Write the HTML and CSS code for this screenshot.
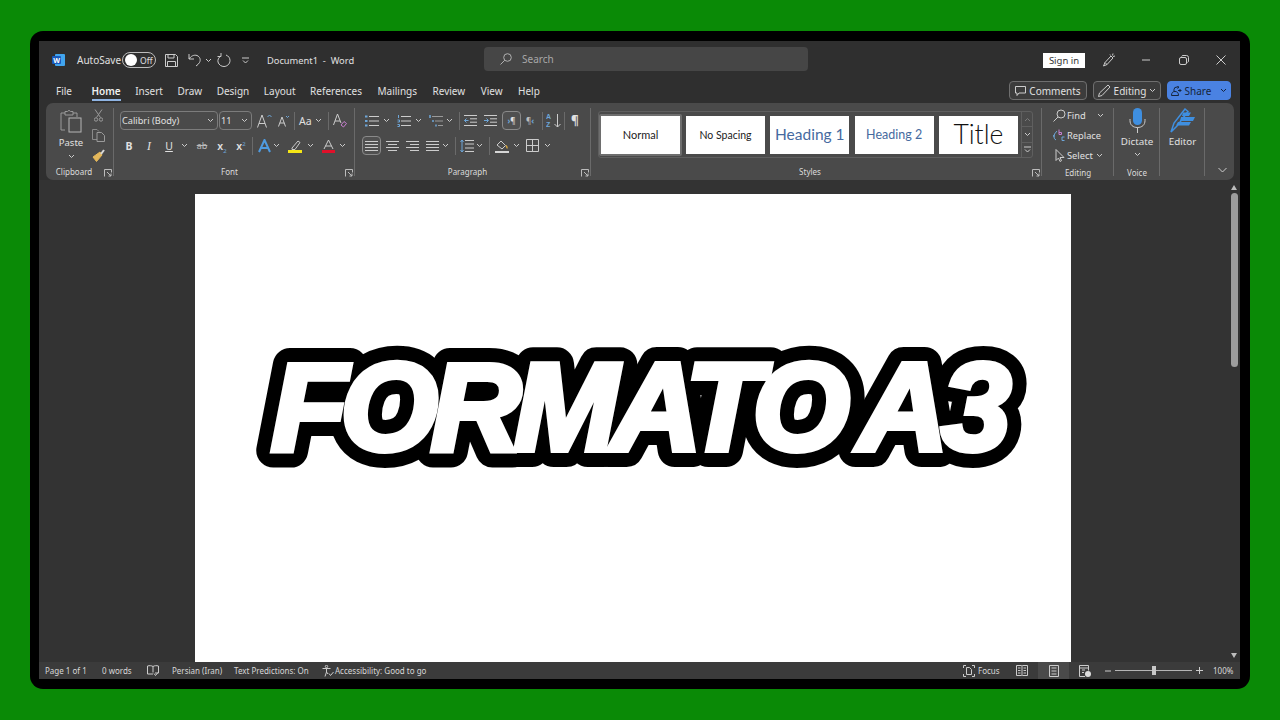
FILE: index.html
```html
<!DOCTYPE html>
<html lang="en">
<head>
    <meta charset="UTF-8">
    <title>Document1 - Word</title>
    <link rel="stylesheet" href="styles.css">
</head>
<body>
<svg class="defs" width="0" height="0">
    <symbol id="chev" viewBox="0 0 7 5"><path d="M1 1l2.500 2.500L6 1"/></symbol>
    <symbol id="launch" viewBox="0 0 8 8"><path d="M.5 7.500V.5h7v3M3 3l4 4M7 4.500V7H4.500"/></symbol>
    <symbol id="lines" viewBox="0 0 13 12"><path d="M0 1.500h13M0 4.500h13M0 7.500h13M0 10.500h13"/></symbol>
</svg>

<div class="frame">
<div class="window">

    <!-- title bar -->
    <div class="titlebar">
        <div class="tb-left">
            <svg class="word-logo" width="13" height="12" viewBox="0 0 13 12"><rect x="3" y="0" width="10" height="12" rx="1" fill="#41a5ee" stroke="none"/><rect x="0" y="2" width="9" height="8" rx="1" fill="#185abd" stroke="none"/><text x="1.200" y="8.500" font-size="7" font-weight="700" fill="#fff">W</text></svg>
            <span class="autosave">AutoSave</span>
            <span class="toggle"><i class="knob"></i><span>Off</span></span>
            <svg class="save" width="13" height="13" viewBox="0 0 13 13"><path d="M.5.5h10l2 2v10H.5zM3 .5v3.500h6V.5M2.500 12.500V7.500h8v5"/></svg>
            <svg class="undo" width="14" height="14" viewBox="0 0 14 14"><path d="M1 1v5h5M1 6c2-3 5-4.500 8-3.500 3 1.200 4 4.500 2.500 7-.8 1.500-2 2.500-3.500 3.500"/></svg>
            <svg class="chev-sm ml3" width="7" height="5"><use href="#chev"/></svg>
            <svg class="redo" width="14" height="14" viewBox="0 0 14 14"><path d="M4 3C1.500 4.500.5 7 1 9c.8 3 3.500 4.500 6 4.500 3 0 6-2.500 6-6 0-2.500-1.500-4.500-4-5.500M4 0v3.500H.5"/></svg>
            <svg class="qat" width="7" height="7" viewBox="0 0 7 7"><path d="M0 1h7M1 3.500l2.500 2.500L6 3.500"/></svg>
            <span class="doc-title">Document1&nbsp; - &nbsp;Word</span>
        </div>
        <div class="search">
            <svg width="12" height="12" viewBox="0 0 12 12"><circle cx="7.500" cy="4.500" r="3.800"/><path d="M4.800 7.200L.5 11.500"/></svg>
            <span>Search</span>
        </div>
        <div class="tb-right">
            <span class="signin">Sign in</span>
            <svg class="pen" width="14" height="15" viewBox="0 0 14 15"><path d="M9 3L3 9.500 1.500 13l3.500-1.500L11 5zM8 1.500l.5 1M11 .5l-.5 2M13 3l-2 .5M3 9.500l2 2"/></svg>
            <svg class="win-min" width="10" height="10" viewBox="0 0 10 10"><path d="M1 5h8"/></svg>
            <svg class="win-max" width="10" height="10" viewBox="0 0 10 10"><rect x=".5" y="2.500" width="7" height="7" rx="1.500"/><path d="M2.500 1.500q.5-1 1.500-1h3.500q2 0 2 2V6q0 1-1 1.500"/></svg>
            <svg class="win-close" width="10" height="10" viewBox="0 0 10 10"><path d="M.5.5l9 9M9.500.5l-9 9"/></svg>
        </div>
    </div>

    <!-- tabs -->
    <div class="tabs">
        <span class="tab tab-file">File</span>
        <span class="tab active">Home</span>
        <span class="tab">Insert</span>
        <span class="tab">Draw</span>
        <span class="tab">Design</span>
        <span class="tab">Layout</span>
        <span class="tab">References</span>
        <span class="tab tab-late">Mailings</span>
        <span class="tab tab-late">Review</span>
        <span class="tab tab-late">View</span>
        <span class="tab tab-late">Help</span>
        <div class="tab-actions">
            <span class="pill pill-comments">
                <svg width="11" height="10" viewBox="0 0 11 10"><path d="M.5.5h10v6.500H4L2 9.500V7H.5z"/></svg>Comments
            </span>
            <span class="pill pill-editing">
                <svg width="13" height="13" viewBox="0 0 13 13"><path d="M10 1l2 2-8 8.500-3.500 1 1-3.500z"/></svg>Editing
                <svg width="7" height="5"><use href="#chev"/></svg>
            </span>
            <span class="pill pill-share">
                <svg width="11" height="10" viewBox="0 0 11 10"><path d="M.5 9.500c0-3 1.500-4 3.500-4s3.500 1 3.500 4zM3 5.500V3.500Q3 1 6 1h1.500M6.500 .5L8 1.200 6.500 2.500M7 4.500h3.500M9 3v3"/></svg>Share
                <svg class="share-chev" width="7" height="5"><use href="#chev"/></svg>
            </span>
        </div>
    </div>

    <!-- ribbon -->
    <div class="ribbon">

        <div class="group g-clipboard">
            <div class="group-body clip-body">
                <div class="paste">
                    <svg width="22" height="24" viewBox="0 0 22 24"><path d="M5 21H1V4h4M13 4h4v4M5 4V2.500h2.500Q9 0 10.500 2.500H13V6H5z" stroke="#9a9a9a"/><rect x="9" y="9" width="12" height="14" stroke="#b5b5b5"/></svg>
                    <span>Paste</span>
                    <svg width="7" height="5"><use href="#chev"/></svg>
                </div>
                <div class="clip-small">
                    <svg width="9" height="13" viewBox="0 0 9 13"><path d="M1 .5l5.500 8M8 .5L2.500 8.500" stroke="#9a9a9a"/><circle cx="2" cy="10.500" r="1.700" stroke="#9a9a9a"/><circle cx="7" cy="10.500" r="1.700" stroke="#9a9a9a"/></svg>
                    <svg width="13" height="13" viewBox="0 0 13 13"><path d="M5 10.500H.5V.5H5l2 2" stroke="#8a8a8a"/><path d="M5 3.500h4.500l3 3v6H5z" stroke="#9a9a9a"/></svg>
                    <svg width="13" height="13" viewBox="0 0 13 13"><path d="M8 3L1 8l3.500 4.500L10 6z" fill="#e3b75b" stroke="#e3b75b"/><path d="M9 5l3-4" stroke="#d8d8d8" stroke-width="2"/></svg>
                </div>
            </div>
            <div class="group-label">Clipboard</div>
            <svg class="launcher" width="8" height="8"><use href="#launch"/></svg>
        </div>

        <div class="group g-font">
            <div class="group-body rows">
                <div class="row">
                    <div class="select sel-font"><span>Calibri (Body)</span><svg width="7" height="5"><use href="#chev"/></svg></div>
                    <div class="select sel-size ml1"><span>11</span><svg width="7" height="5"><use href="#chev"/></svg></div>
                    <svg class="ml5" width="15" height="14" viewBox="0 0 15 14"><path d="M.5 13.500L5 1l4.500 12.500M2 9.500h6"/><path d="M10.500 3l2-2 2 2" stroke="#6ea6d8"/></svg>
                    <svg class="ml6" width="12" height="12" viewBox="0 0 12 12"><path d="M.5 11.500L4 2l3.500 9.500M1.800 8h4.400"/><path d="M8 1l1.500 1.500L11 1" stroke="#6ea6d8"/></svg>
                    <i class="sep ml4"></i>
                    <span class="txt-icon aa ml4">Aa</span>
                    <svg class="ml1" width="7" height="5"><use href="#chev"/></svg>
                    <i class="sep ml6"></i>
                    <svg class="ml4" width="14" height="15" viewBox="0 0 14 15"><path d="M.5 12L4.500 1 8 10M2 8h5"/><path d="M8 12l3-3.500 2.500 2-3 3.500z" stroke="#c77fd0"/></svg>
                </div>
                <div class="row">
                    <span class="fmt bold">B</span>
                    <span class="fmt ital ml2">I</span>
                    <span class="fmt under ml2">U</span>
                    <svg class="ml3" width="7" height="5"><use href="#chev"/></svg>
                    <span class="fmt strike ml7">ab</span>
                    <span class="fmt script ml6">x<sub>2</sub></span>
                    <span class="fmt script ml5">x<sup>2</sup></span>
                    <i class="sep ml4"></i>
                    <svg class="ml5" width="13" height="14" viewBox="0 0 13 14"><path d="M1 13L6.500 1 12 13M3 9h7" stroke="#4f9be0" stroke-width="2"/></svg>
                    <svg class="ml2" width="7" height="5"><use href="#chev"/></svg>
                    <svg class="ml8" width="14" height="14" viewBox="0 0 14 14"><path d="M4 9l6-7 2 1.500-5 7H4z"/><rect x="0" y="11" width="14" height="3" fill="#f5e616" stroke="none"/></svg>
                    <svg class="ml5" width="7" height="5"><use href="#chev"/></svg>
                    <svg class="ml8" width="13" height="14" viewBox="0 0 13 14"><path d="M2 10L6.500 1 11 10M3.500 7h6"/><rect x="0" y="11" width="13" height="3" fill="#e0102a" stroke="none"/></svg>
                    <svg class="ml4" width="7" height="5"><use href="#chev"/></svg>
                </div>
            </div>
            <div class="group-label">Font</div>
            <svg class="launcher" width="8" height="8"><use href="#launch"/></svg>
        </div>

        <div class="group g-para">
            <div class="group-body rows">
                <div class="row">
                    <svg class="ml3" width="14" height="12" viewBox="0 0 14 12"><path d="M4 1.500h10M4 6h10M4 10.500h10"/><path d="M0 1.500h2.500M0 6h2.500M0 10.500h2.500" stroke="#6ea6d8" stroke-width="2"/></svg>
                    <svg class="ml4" width="7" height="5"><use href="#chev"/></svg>
                    <svg class="ml7" width="14" height="12" viewBox="0 0 14 12"><path d="M4 1.500h10M4 6h10M4 10.500h10"/><path d="M1.500 0v3M.5 5h2v2h-2M.5 9.500h2v2h-2" stroke="#6ea6d8"/></svg>
                    <svg class="ml4" width="7" height="5"><use href="#chev"/></svg>
                    <svg class="ml7" width="14" height="12" viewBox="0 0 14 12"><path d="M3 1.500h11M6 6h8M9 10.500h5" stroke="#9a9a9a"/><path d="M1 0v3M4 5v2M7 9.500v2" stroke="#6ea6d8" stroke-width="1.500"/></svg>
                    <svg class="ml3" width="7" height="5"><use href="#chev"/></svg>
                    <i class="sep ml6"></i>
                    <svg class="ml4" width="13" height="11" viewBox="0 0 13 11"><path d="M0 .5h13M6 3.800h7M6 7.200h7M0 10.500h13"/><path d="M4.500 5.500H.5M2.500 3.500l-2 2 2 2" stroke="#6ea6d8"/></svg>
                    <svg class="ml7" width="13" height="11" viewBox="0 0 13 11"><path d="M0 .5h13M6 3.800h7M6 7.200h7M0 10.500h13"/><path d="M0 5.500h4M2.500 3.500l2 2-2 2" stroke="#6ea6d8"/></svg>
                    <span class="btn-on ltr ml5"><b>›</b>¶</span>
                    <span class="rtl ml5">¶<b>‹</b></span>
                    <i class="sep ml4"></i>
                    <svg class="sort ml3" width="15" height="17" viewBox="0 0 15 17"><text x="0" y="7" fill="#6ea6d8">A</text><text x="0" y="15" fill="#6ea6d8">Z</text><path d="M11.500 2v13M8.500 12l3 3 3-3"/></svg>
                    <i class="sep ml3"></i>
                    <span class="pilcrow ml6">¶</span>
                </div>
                <div class="row">
                    <span class="btn-on"><svg width="13" height="12"><use href="#lines"/></svg></span>
                    <svg class="ml5" width="13" height="12" viewBox="0 0 13 12"><path d="M0 1.500h13M2 4.500h9M0 7.500h13M2 10.500h9"/></svg>
                    <svg class="ml7" width="13" height="12" viewBox="0 0 13 12"><path d="M0 1.500h13M4 4.500h9M0 7.500h13M4 10.500h9"/></svg>
                    <svg class="ml7" width="13" height="12"><use href="#lines"/></svg>
                    <svg class="ml3" width="7" height="5"><use href="#chev"/></svg>
                    <i class="sep ml6"></i>
                    <svg class="ml4" width="14" height="14" viewBox="0 0 14 14"><path d="M5 1.500h9M5 5h9M5 9h9M5 12.500h9"/><path d="M2 1v12M.5 3L2 1l1.500 2M.5 11L2 13l1.500-2" stroke="#6ea6d8"/></svg>
                    <svg class="ml2" width="7" height="5"><use href="#chev"/></svg>
                    <i class="sep ml6"></i>
                    <svg class="ml5" width="14" height="14" viewBox="0 0 14 14"><path d="M2 6l4-4 4.500 4.500-3.500 3.500z"/><path d="M11 6.500q1.500 2 1 3" stroke="#d6a53e" stroke-width="1.500"/><rect x="0" y="12" width="14" height="2" fill="#d6d6d6" stroke="none"/></svg>
                    <svg class="ml4" width="7" height="5"><use href="#chev"/></svg>
                    <svg class="ml6" width="13" height="13" viewBox="0 0 13 13"><path d="M.5.5h12v12H.5zM6.500.5v12M.5 6.500h12"/></svg>
                    <svg class="ml5" width="7" height="5"><use href="#chev"/></svg>
                </div>
            </div>
            <div class="group-label">Paragraph</div>
            <svg class="launcher" width="8" height="8"><use href="#launch"/></svg>
        </div>

        <div class="group g-styles">
            <div class="group-body">
                <div class="gallery">
                    <div class="style-active"><span class="style-cell s-normal">Normal</span></div>
                    <span class="style-cell s-nospace">No Spacing</span>
                    <span class="style-cell s-h1">Heading 1</span>
                    <span class="style-cell s-h2">Heading 2</span>
                    <span class="style-cell s-title">Title</span>
                    <div class="gallery-scroll">
                        <span><svg class="flip dim" width="7" height="5"><use href="#chev"/></svg></span>
                        <span><svg width="7" height="5"><use href="#chev"/></svg></span>
                        <span><svg width="7" height="7" viewBox="0 0 7 7"><path d="M0 1h7M1 3.500l2.500 2.500L6 3.500"/></svg></span>
                    </div>
                </div>
            </div>
            <div class="group-label">Styles</div>
            <svg class="launcher" width="8" height="8"><use href="#launch"/></svg>
        </div>

        <div class="group g-editing">
            <div class="group-body edit-list">
                <div class="edit-row">
                    <svg width="13" height="13" viewBox="0 0 13 13"><circle cx="8" cy="5" r="4"/><path d="M5 8L.5 12.500"/></svg>
                    <span>Find</span>
                    <svg class="find-chev" width="7" height="5"><use href="#chev"/></svg>
                </div>
                <div class="edit-row">
                    <svg width="13" height="13" viewBox="0 0 13 13"><path d="M6 .5v5M6 3.500h2.500v2H6" stroke="#c77fd0"/><path d="M11.500 8h-2.500v3.500h2.500" stroke="#6ea6d8"/><path d="M4 2Q.5 5 1 8M3 11q-2-1-2-3M1 8L.5 6" stroke="#6ea6d8"/></svg>
                    <span>Replace</span>
                </div>
                <div class="edit-row">
                    <svg width="13" height="13" viewBox="0 0 13 13"><path d="M3 .5v11l2.500-2.500 1.500 3.500 1.500-.8L7 8.500h4z"/></svg>
                    <span>Select</span>
                    <svg class="sel-chev" width="7" height="5"><use href="#chev"/></svg>
                </div>
            </div>
            <div class="group-label">Editing</div>
        </div>

        <div class="group g-voice">
            <div class="group-body big-btn">
                <svg width="17" height="25" viewBox="0 0 17 25"><rect x="4" y="0" width="9" height="17" rx="4.500" fill="#3f8fe0" stroke="none"/><path d="M1 11v1.500C1 17 4 19.500 8.500 19.500S16 17 16 12.500V11M8.500 19.500V25"/></svg>
                <span>Dictate</span>
                <svg width="7" height="5"><use href="#chev"/></svg>
            </div>
            <div class="group-label">Voice</div>
        </div>

        <div class="group g-editor">
            <div class="group-body big-btn">
                <svg width="25" height="25" viewBox="0 0 25 25"><path d="M1 24L4 15 15 1l3 2.500L7 18z" stroke="#3f8fe0" fill="none" stroke-width="1.500"/><path d="M11 9h14l-2 4H10zM8 14h13l-2 3.500H6zM13 4.500h8L19 8h-7z" fill="#3f8fe0" stroke="none"/></svg>
                <span>Editor</span>
            </div>
            <div class="group-label"></div>
        </div>

        <div class="ribbon-end">
            <svg width="9" height="6" viewBox="0 0 9 6"><path d="M.5 1l4 4 4-4"/></svg>
        </div>
    </div>

    <!-- document area -->
    <div class="canvas">
        <div class="page">
            <svg class="headline" width="876" height="300" viewBox="0 0 876 300">
                <g class="h-back"><text id="headline" x="76" y="256" textLength="740" lengthAdjust="spacing">FORMATO A3</text></g>
                <g class="h-front"><use href="#headline"/></g>
            </svg>
        </div>
        <div class="scrollbar">
            <i class="arrow-up"></i>
            <i class="thumb"></i>
            <i class="arrow-down"></i>
        </div>
    </div>

    <!-- status bar -->
    <div class="statusbar">
        <span class="st-page">Page 1 of 1</span>
        <span class="st-words">0 words</span>
        <svg class="st-book" width="12" height="11" viewBox="0 0 12 11"><path d="M.5 1C2.500.5 4.500.5 6 1.500 7.500.5 9.500.5 11.500 1v7H8M6 1.500v6M.5 1v8H6"/><path d="M7 8.500l1.500 2L11 7.500"/></svg>
        <span class="st-lang">Persian (Iran)</span>
        <span class="st-pred">Text Predictions: On</span>
        <svg class="st-acc" width="12" height="12" viewBox="0 0 12 12"><circle cx="4.500" cy="1.500" r="1.200"/><path d="M.5 3.500h8M4.500 3.500V7L3 11.500M4.500 7L6 9M7 8.500l1.500 2L11.500 7"/></svg>
        <span class="st-access">Accessibility: Good to go</span>
        <div class="st-right">
            <svg width="12" height="12" viewBox="0 0 12 12"><path d="M.5 3V.5H3M9 .5h2.500V3M11.500 9v2.500H9M3 11.500H.5V9M3.500 2.500h3l2 2v5h-5z"/></svg>
            <span class="st-focus">Focus</span>
            <svg class="st-read" width="12" height="11" viewBox="0 0 12 11"><path d="M.5.5H5.500l.5.500.5-.5h5v10h-5L6 10l-.5.500H.5zM6 1v9M2 3h2.500M2 5.500h2.500M2 8h2.500M7.500 3H10M7.500 5.500H10M7.500 8H10"/></svg>
            <span class="st-print"><svg width="10" height="12" viewBox="0 0 10 12"><path d="M.5.5h9v11h-9zM2.500 3h5M2.500 6h5M2.500 9h5"/></svg></span>
            <svg class="st-web" width="12" height="12" viewBox="0 0 12 12"><path d="M.5.5h9v5M.5.5v11H6M.5 3h9M3 5h3M3 7.500h2"/><circle cx="9" cy="9" r="3" fill="#ddd" stroke="none"/></svg>
            <svg class="st-minus" width="6" height="6" viewBox="0 0 6 6"><path d="M0 3h6"/></svg>
            <div class="zoom-track"><i class="zoom-thumb"></i></div>
            <svg class="st-plus" width="7" height="7" viewBox="0 0 7 7"><path d="M0 3.500h7M3.500 0v7"/></svg>
            <span class="st-zoom">100%</span>
        </div>
    </div>

</div>
</div>
</body>
</html>
```

FILE: styles.css
```css
* {
    box-sizing: border-box;
}

body {
    margin: 0;
    height: 720px;
    overflow: hidden;
    background-color: #0a8a06;
    font-family: "Noto Sans", "Open Sans", sans-serif;
    font-size: 10px;
    color: #e0e0e0;
}

svg {
    display: block;
    flex: none;
    fill: none;
    stroke: #cccccc;
    stroke-width: 1;
}

svg text {
    stroke: none;
    font-family: "Noto Sans", sans-serif;
}

.defs {
    position: absolute;
}

.frame {
    margin: 31px 30px 0;
    width: 1220px;
    height: 658px;
    padding: 10px 10px 10px 9px;
    background-color: #000;
    border-radius: 13px;
}

.window {
    display: flex;
    flex-direction: column;
    height: 638px;
    background-color: #2f2f2f;
}

/* margins between ribbon items */
.ml1 { margin-left: 1px; }
.ml2 { margin-left: 2px; }
.ml3 { margin-left: 3px; }
.ml4 { margin-left: 4px; }
.ml5 { margin-left: 5px; }
.ml6 { margin-left: 6px; }
.ml7 { margin-left: 7px; }
.ml8 { margin-left: 8px; }

/* title bar */
.titlebar {
    display: flex;
    align-items: center;
    height: 37px;
    flex: none;
    padding-top: 1px;
}

.tb-left {
    display: flex;
    align-items: center;
    width: 445px;
    padding-left: 13px;
}

.autosave {
    width: 45px;
    margin-left: 12px;
}

.toggle {
    display: flex;
    align-items: center;
    width: 34px;
    height: 16px;
    padding-left: 2px;
    border: 1px solid #bdbdbd;
    border-radius: 8px;
    font-size: 8.500px;
}

.knob {
    width: 12px;
    height: 12px;
    margin-right: 3px;
    background-color: #fff;
    border-radius: 50%;
}

.save {
    margin-left: 9px;
}

.undo {
    margin-left: 10px;
}

.redo {
    margin-left: 5px;
}

.qat {
    margin-left: 11px;
}

.doc-title {
    margin-left: 18px;
    white-space: nowrap;
    font-size: 9.300px;
}

.search {
    display: flex;
    align-items: center;
    gap: 10px;
    width: 324px;
    height: 24px;
    margin-top: -2px;
    padding-left: 16px;
    background-color: #464646;
    border-radius: 4px;
    color: #a8a8a8;
}

.search svg {
    stroke: #b0b0b0;
}

.tb-right {
    display: flex;
    align-items: center;
    flex: 1;
    justify-content: flex-end;
    padding-right: 14px;
}

.signin {
    width: 42px;
    height: 15px;
    background-color: #fff;
    color: #333;
    font-size: 9.500px;
    line-height: 15px;
    text-align: center;
}

.pen { margin-left: 17px; }
.win-min { margin-left: 25px; }
.win-max { margin-left: 28px; }
.win-close { margin-left: 27px; }

/* tabs */
.tabs {
    display: flex;
    align-items: center;
    gap: 14.500px;
    height: 25px;
    flex: none;
    padding-left: 17px;
}

.tab {
    position: relative;
    white-space: nowrap;
}

.tab-file {
    margin-right: 5px;
}

.tab-late {
    margin-left: 1px;
}

.tab.active {
    font-weight: 600;
    color: #f0f0f0;
}

.tab.active::after {
    content: "";
    position: absolute;
    left: 0;
    right: 0;
    bottom: -3px;
    height: 2px;
    background-color: #8fb4e3;
}

.tab-actions {
    display: flex;
    gap: 6px;
    margin-left: auto;
    margin-right: 9px;
}

.pill {
    display: flex;
    align-items: center;
    justify-content: center;
    gap: 3px;
    height: 19px;
    background-color: #3c3c3c;
    border: 1px solid #6f6f6f;
    border-radius: 4px;
    white-space: nowrap;
}

.pill-comments { width: 78px; }
.pill-editing { width: 68px; }

.pill-share {
    width: 64px;
    background-color: #4a82e2;
    border-color: #4a82e2;
    color: #16243c;
}

.pill-share svg {
    stroke: #16243c;
}

.share-chev {
    margin-left: 6px;
}

/* ribbon */
.ribbon {
    display: flex;
    flex: none;
    width: 1188px;
    height: 77px;
    margin-left: 7px;
    background-color: #4a4a4a;
    border-radius: 7px;
}

.group {
    position: relative;
    display: flex;
    flex-direction: column;
    flex: none;
}

.group::after {
    content: "";
    position: absolute;
    top: 5px;
    bottom: 4px;
    right: 0;
    width: 1px;
    background-color: #6a6a6a;
}

.g-clipboard { width: 68px; }
.g-font { width: 241px; padding-left: 6px; }
.g-para { width: 236px; padding-left: 7px; }
.g-styles { width: 451px; padding-left: 7px; }
.g-editing { width: 72px; }
.g-voice { width: 46px; }
.g-editor { width: 45px; }

.group-body {
    height: 61px;
    flex: none;
    padding-top: 8px;
}

.group-label {
    height: 16px;
    font-size: 8px;
    line-height: 15px;
    text-align: center;
    color: #dcdcdc;
}

.g-clipboard .group-label { padding-right: 12px; }
.g-font .group-label { padding-right: 16px; }
.g-para .group-label { padding-right: 18px; }
.g-styles .group-label { padding-right: 20px; }
.g-editing .group-label,
.g-voice .group-label { padding-top: 1px; }

.launcher {
    position: absolute;
    right: 2px;
    bottom: 3px;
    stroke: #bcbcbc;
}

.clip-body {
    display: flex;
    padding-top: 6px;
    padding-left: 14px;
}

.paste {
    display: flex;
    flex-direction: column;
    align-items: center;
    width: 22px;
}

.paste span {
    margin-top: 3px;
    font-size: 9.500px;
    line-height: 14px;
}

.paste svg:last-child {
    margin-top: 4px;
}

.clip-small {
    display: flex;
    flex-direction: column;
    align-items: center;
    gap: 7px;
    width: 14px;
    margin-left: 9px;
}

.rows {
    display: flex;
    flex-direction: column;
    gap: 6px;
}

.row {
    display: flex;
    align-items: center;
    height: 19px;
}

.sep {
    flex: none;
    width: 1px;
    height: 18px;
    background-color: #6a6a6a;
}

.select {
    display: flex;
    align-items: center;
    justify-content: space-between;
    height: 19px;
    padding: 0 3px 0 1px;
    border: 1px solid #7c7c7c;
    border-radius: 4px;
    font-size: 9.200px;
    white-space: nowrap;
}

.sel-font { width: 98px; }
.sel-size { width: 33px; }

.txt-icon.aa {
    width: 15px;
    font-size: 10.500px;
    white-space: nowrap;
}

.fmt {
    flex: none;
    width: 18px;
    font-size: 10.500px;
    line-height: 14px;
    text-align: center;
}

.bold { font-weight: 700; }
.ital { font-family: "Liberation Serif", serif; font-style: italic; font-size: 12px; }
.under { text-decoration: underline; text-underline-offset: 1px; }

.strike {
    width: 14px;
    font-size: 9px;
    text-decoration: line-through;
    color: #bbb;
}

.script {
    width: 14px;
    font-weight: 600;
    white-space: nowrap;
}

.script sub,
.script sup {
    font-size: 6px;
    line-height: 0;
    color: #6ea6d8;
    font-weight: 400;
}

.btn-on {
    display: flex;
    align-items: center;
    justify-content: center;
    flex: none;
    width: 19px;
    height: 19px;
    background-color: #505050;
    border: 1px solid #8a8a8a;
    border-radius: 4px;
}

.ltr,
.rtl {
    font-size: 8px;
    white-space: nowrap;
}

.ltr b,
.rtl b {
    color: #6ea6d8;
    font-weight: 700;
}

.rtl {
    display: block;
    width: 12px;
    color: #bdbdbd;
}

.sort text {
    font-family: "Liberation Sans", sans-serif;
    font-size: 7px;
    font-weight: 700;
}

.pilcrow {
    width: 10px;
    font-size: 12px;
    font-weight: 700;
    line-height: 14px;
}

/* styles gallery */
.gallery {
    display: flex;
    align-items: center;
    width: 435px;
    height: 47px;
    border: 1px solid #5f5f5f;
    border-radius: 3px;
}

.style-active {
    flex: none;
    margin-right: 4px;
    padding: 2px;
    background-color: #6e6e6e;
    border-radius: 2px;
}

.style-cell {
    display: flex;
    align-items: center;
    justify-content: center;
    flex: none;
    width: 79px;
    height: 38px;
    margin-right: 5.300px;
    background-color: #fff;
    color: #222;
    font-family: Lato, sans-serif;
    white-space: nowrap;
}

.style-active .style-cell {
    margin-right: 0;
}

.s-normal { font-size: 11px; }
.s-nospace { font-size: 10.500px; }
.s-h1 { font-size: 15.500px; color: #466a9f; padding-bottom: 2px; }
.s-h2 { font-size: 12.500px; color: #466a9f; }
.s-title { font-size: 26.500px; font-weight: 300; margin-right: 3px; color: #111; padding-bottom: 2px; }

.gallery-scroll {
    display: flex;
    flex-direction: column;
    flex: none;
    width: 12px;
    height: 45px;
    border-left: 1px solid #5f5f5f;
}

.gallery-scroll span {
    display: flex;
    align-items: center;
    justify-content: center;
    flex: 1;
}

.gallery-scroll span + span {
    border-top: 1px solid #5f5f5f;
}

.flip {
    transform: rotate(180deg);
}

.dim {
    stroke: #7a7a7a;
}

/* editing, voice, editor */
.edit-list {
    display: flex;
    flex-direction: column;
    gap: 6px;
    padding-top: 5px;
    padding-left: 11px;
}

.edit-row {
    display: flex;
    align-items: center;
    gap: 1px;
    height: 14px;
    white-space: nowrap;
    font-size: 9.300px;
}

.find-chev { margin-left: 10px; }
.sel-chev { margin-left: 2px; }

.big-btn {
    display: flex;
    flex-direction: column;
    align-items: center;
    padding-top: 5px;
}

.big-btn span {
    margin-top: 2px;
    font-size: 9.800px;
    line-height: 14px;
}

.big-btn svg + span + svg {
    margin-top: 3px;
}

.ribbon-end {
    display: flex;
    align-items: flex-end;
    flex: 1;
    justify-content: center;
    padding-left: 6px;
    padding-bottom: 7px;
}

/* document */
.canvas {
    display: flex;
    flex: 1;
    background-color: #333;
    min-height: 0;
}

.page {
    width: 876px;
    height: 468px;
    margin-top: 14px;
    margin-left: 156px;
    background-color: #fff;
}

.headline text {
    stroke: inherit;
    font-family: "Liberation Sans", sans-serif;
    font-size: 125px;
    font-weight: 700;
    font-style: italic;
    word-spacing: -8px;
}

.h-back {
    fill: #000;
    stroke: #000;
    stroke-width: 34px;
    stroke-linejoin: round;
}

.h-front {
    fill: #fff;
    stroke: #fff;
    stroke-width: 6px;
    stroke-linejoin: miter;
}

.scrollbar {
    display: flex;
    flex-direction: column;
    align-items: center;
    width: 12px;
    margin-left: auto;
    padding-top: 5px;
    padding-bottom: 4px;
}

.arrow-up,
.arrow-down {
    width: 0;
    height: 0;
    border-left: 3.500px solid transparent;
    border-right: 3.500px solid transparent;
}

.arrow-up {
    border-bottom: 5px solid #bdbdbd;
}

.arrow-down {
    margin-top: auto;
    border-top: 5px solid #bdbdbd;
}

.thumb {
    width: 7px;
    height: 174px;
    margin-top: 3px;
    background-color: #9e9e9e;
    border-radius: 4px;
}

/* status bar */
.statusbar {
    display: flex;
    align-items: center;
    flex: none;
    height: 17px;
    padding-left: 6px;
    background-color: #3b3b3b;
    font-size: 8px;
    color: #d8d8d8;
    white-space: nowrap;
}

.st-page { width: 57px; }
.st-words { width: 45px; }
.st-book { margin-right: 13px; }
.st-lang { width: 62px; }
.st-pred { width: 88px; }
.st-acc { margin-right: 1px; }

.st-right {
    display: flex;
    align-items: center;
    height: 17px;
    margin-left: auto;
    width: 277px;
}

.st-focus { margin-left: 3px; width: 38px; }

.st-print {
    display: flex;
    align-items: center;
    justify-content: center;
    width: 31px;
    height: 17px;
    margin-left: 10px;
    background-color: #4a4a4a;
}

.st-web { margin-left: 10px; }
.st-minus { margin-left: 14px; }

.zoom-track {
    display: flex;
    align-items: center;
    justify-content: center;
    width: 77px;
    height: 1px;
    margin-left: 4px;
    background-color: #b5b5b5;
}

.zoom-thumb {
    width: 4px;
    height: 9px;
    background-color: #c8c8c8;
}

.st-plus { margin-left: 4px; }
.st-zoom { margin-left: 10px; }
```
